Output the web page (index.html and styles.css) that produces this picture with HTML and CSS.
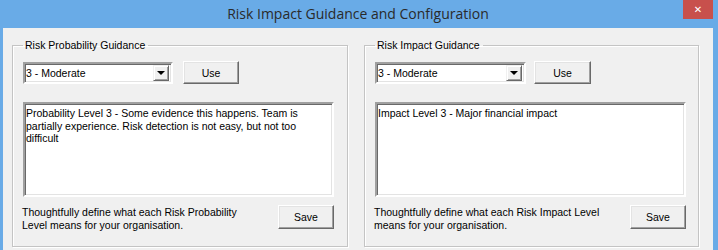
FILE: index.html
```html
<!DOCTYPE html>
<html lang="en">
<head>
    <meta charset="UTF-8">
    <meta name="viewport" content="width=device-width, initial-scale=1.0">
    <title>Risk Impact Guidance and Configuration</title>
    <link rel="stylesheet" href="styles.css">
</head>
<body>
    <div class="window">
        <div class="titlebar">
            <span></span>
            <span class="title">Risk Impact Guidance and Configuration</span>
            <button class="close">&#x2715;</button>
        </div>

        <div class="client">
            <!-- Probability -->
            <fieldset class="group group-left">
                <legend>Risk Probability Guidance</legend>
                <div class="pick-row">
                    <div class="combo">
                        <span class="combo-value">3 - Moderate</span>
                        <span class="combo-arrow"></span>
                    </div>
                    <button class="btn">Use</button>
                </div>
                <div class="memo">Probability Level 3 - Some evidence this happens. Team is<br>partially experience. Risk detection is not easy, but not too<br>difficult</div>
                <div class="foot-row">
                    <p class="hint">Thoughtfully define what each Risk Probability<br>Level means for your organisation.</p>
                    <button class="btn">Save</button>
                </div>
            </fieldset>

            <!-- Impact -->
            <fieldset class="group group-right">
                <legend>Risk Impact Guidance</legend>
                <div class="pick-row">
                    <div class="combo">
                        <span class="combo-value">3 - Moderate</span>
                        <span class="combo-arrow"></span>
                    </div>
                    <button class="btn">Use</button>
                </div>
                <div class="memo">Impact Level 3 - Major financial impact</div>
                <div class="foot-row">
                    <p class="hint">Thoughtfully define what each Risk Impact Level<br>means for your organisation.</p>
                    <button class="btn">Save</button>
                </div>
            </fieldset>
        </div>
    </div>
</body>
</html>
```

FILE: styles.css
```css
body {
    margin: 0;
    font-family: "Liberation Sans", Arial, sans-serif;
    font-size: 10.5px;
    color: #000;
    background-color: #69abe7;
}
.window {
    width: 718px;
    height: 250px;
    background-color: #69abe7;
    padding: 0 5px 0 3px;
    box-sizing: border-box;
}
.titlebar {
    height: 28px;
    display: grid;
    grid-template-columns: 1fr auto 1fr;
    margin: 0 -5px 0 -3px;
    padding: 0 5px 0 3px;
}
.title {
    font-family: "Open Sans", "Noto Sans", sans-serif;
    font-size: 14px;
    color: #2a2a2a;
    line-height: 28px;
}
.close {
    justify-self: end;
    align-self: start;
    width: 30px;
    height: 19px;
    padding: 0;
    border: none;
    background-color: #c8504c;
    color: #fff;
    font-family: "DejaVu Sans", sans-serif;
    font-size: 10px;
    font-weight: bold;
    line-height: 19px;
}
.client {
    background-color: #f0f0f0;
    height: 222px;
    padding: 10px 0 0 9px;
    display: grid;
    grid-template-columns: 336px 335px;
    column-gap: 16px;
    align-items: start;
}
.group {
    margin: 0;
    padding: 10px 13px 14px 10px;
    border: 1px solid #c4c4c4;
    box-shadow: inset 1px 1px #fff, 1px 1px #fff;
    min-width: 0;
}
.group-right {
    padding-right: 12px;
}
.group legend {
    padding: 0 3px 0 2px;
    line-height: 14px;
}
.pick-row {
    display: flex;
    align-items: flex-start;
}
.combo {
    width: 150px;
    height: 22px;
    box-sizing: border-box;
    margin-top: 0;
    background: #fff;
    border-style: solid;
    border-width: 2px;
    border-color: #a0a0a0 #fff #fff #a0a0a0;
    box-shadow: inset 1px 1px #696969, inset -1px -1px #e3e3e3;
    display: flex;
    align-items: center;
    padding: 0 2px 0 1px;
}
.group-right .combo {
    width: 151px;
}
.combo-value {
    flex: 1;
    line-height: 16px;
}
.combo-arrow {
    width: 16px;
    height: 16px;
    box-sizing: border-box;
    background: #f0f0f0;
    border-style: solid;
    border-width: 1px;
    border-color: #f0f0f0 #696969 #696969 #f0f0f0;
    box-shadow: inset 1px 1px #fff, inset -1px -1px #a0a0a0;
    display: flex;
    align-items: center;
    justify-content: center;
}
.combo-arrow::after {
    content: "";
    border-left: 4px solid transparent;
    border-right: 4px solid transparent;
    border-top: 4px solid #000;
}
.btn {
    font-family: inherit;
    font-size: inherit;
    color: #000;
    width: 56px;
    height: 23px;
    padding: 0;
    background: #f0f0f0;
    border-style: solid;
    border-width: 1px;
    border-color: #fff #696969 #696969 #fff;
    box-shadow: inset -1px -1px #a0a0a0, inset 1px 1px #e3e3e3;
}
.pick-row .btn {
    margin-left: 10px;
    margin-top: -1px;
}
.group-right .pick-row .btn {
    margin-left: 8px;
    width: 57px;
}
.memo {
    margin-top: 18px;
    height: 95px;
    box-sizing: border-box;
    background: #fff;
    border-style: solid;
    border-width: 2px;
    border-color: #a0a0a0 #fff #fff #a0a0a0;
    box-shadow: inset 1px 1px #696969, inset -1px -1px #e3e3e3;
    padding: 3px 2px 0 1px;
    line-height: 12.5px;
    white-space: nowrap;
}
.foot-row {
    margin-top: 8px;
    display: flex;
    justify-content: space-between;
    align-items: flex-start;
}
.hint {
    margin: 1px 0 0 -1px;
    line-height: 13px;
    white-space: nowrap;
}
.foot-row .btn {
    height: 24px;
}
```
